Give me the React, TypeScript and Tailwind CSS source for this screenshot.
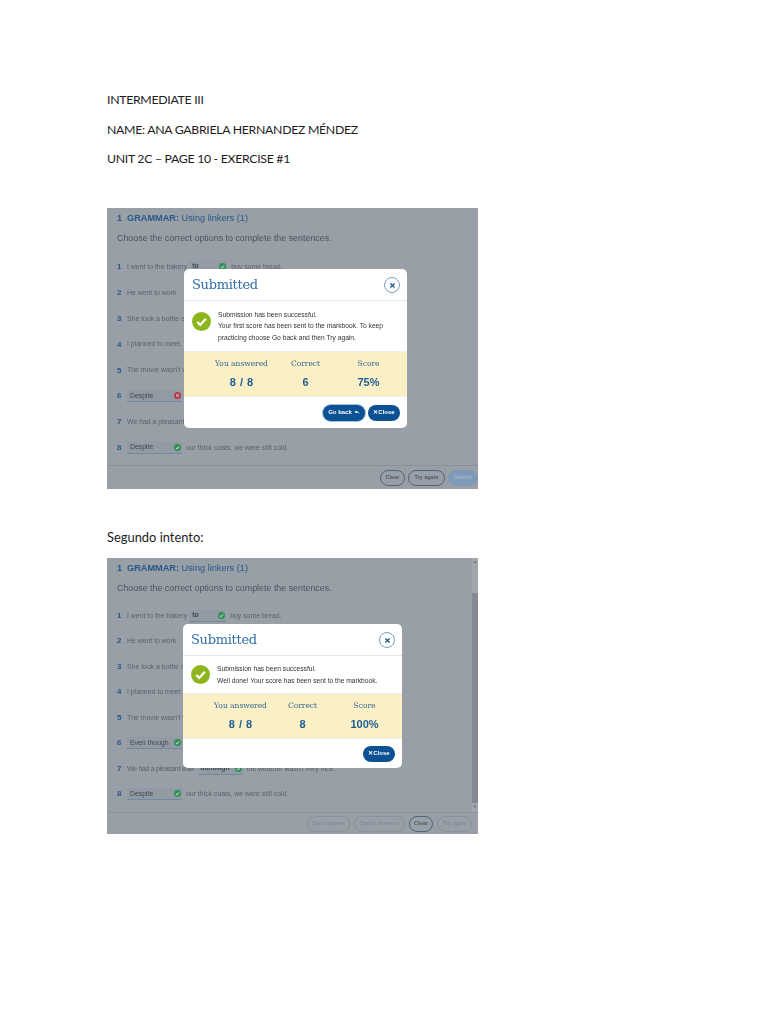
import React from "react";

type Row = { n: number; pre: string; answer?: string; ok?: boolean; post?: string; field?: string; bold?: boolean; preClass?: string };

const Mark = ({ ok = true }: { ok?: boolean }) => (
  <svg viewBox="0 0 10 10" className="w-[7px] h-[7px] shrink-0">
    <circle cx="5" cy="5" r="5" fill={ok ? "#2f8f57" : "#b5384a"} />
    {ok ? (
      <path d="M2.6 5.2 4.4 7 7.6 3.4" stroke="#a9c9b4" strokeWidth="1.5" fill="none" />
    ) : (
      <path d="M3.2 3.2 6.8 6.8M6.8 3.2 3.2 6.8" stroke="#d8a8b0" strokeWidth="1.5" fill="none" />
    )}
  </svg>
);

const ExerciseRow = ({ row, height }: { row: Row; height: string }) => (
  <div className={`flex items-center text-[6.9px] text-[#59636d] whitespace-nowrap ${height}`}>
    <span className="w-[10px] font-bold text-[8px] text-[#27598a]">{row.n}</span>
    <span className={row.preClass}>{row.pre}</span>
    {row.answer && (
      <span
        className={`mr-[4px] h-[12px] flex items-center justify-between border-b border-[#7288a0] bg-[#929aa3] pl-[3px] pr-[1px] text-[#3f4954] ${
          row.bold ? "font-bold" : ""
        } ${row.field ?? "w-[55px]"}`}
      >
        <span>{row.answer}</span>
        <Mark ok={row.ok} />
      </span>
    )}
    <span>{row.post}</span>
  </div>
);

const Pill = ({ children, muted, filled, width }: { children: React.ReactNode; muted?: boolean; filled?: boolean; width: string }) => (
  <span
    className={`h-[16px] rounded-full flex items-center justify-center text-[5.5px] font-bold border whitespace-nowrap ${width} ${
      filled
        ? "bg-[#7d9ab8] border-[#7d9ab8] text-[#a3b5c6]"
        : muted
        ? "border-[#87929c] text-[#838d97]"
        : "border-[#4f6579] text-[#4d5a66]"
    }`}
  >
    {children}
  </span>
);

const Stat = ({ label, value, className }: { label: string; value: string; className: string }) => (
  <div className={`flex flex-col items-center ${className}`}>
    <span className="text-[7.5px] leading-[10px] text-[#2f6796] font-['DejaVu_Serif',serif]">{label}</span>
    <span className="mt-[7px] text-[11px] leading-[12px] font-bold text-[#1c5e98] [word-spacing:1px]">{value}</span>
  </div>
);

const Action = ({ children, ring }: { children: React.ReactNode; ring?: boolean }) => (
  <span
    className={`h-[16px] rounded-full bg-[#0b5193] text-white text-[6px] font-bold flex items-center justify-center gap-[2px] whitespace-nowrap ${
      ring ? "w-[42px] ring-1 ring-[#9cc0de]" : "w-[32px]"
    }`}
  >
    {children}
  </span>
);

const BackArrow = () => (
  <svg viewBox="0 0 10 8" className="w-[6px] h-[5px]">
    <path d="M4 0.5 0.8 3 4 5.5V4c2.4-.4 4 .6 5 3 0-3-1.8-5-5-5.2z" fill="#fff" />
  </svg>
);

const Modal = ({
  lines,
  stats,
  actions,
  className,
  bodyClass,
  iconClass,
}: {
  lines: string[];
  stats: React.ReactNode;
  actions: React.ReactNode;
  className: string;
  bodyClass: string;
  iconClass?: string;
}) => (
  <div className={`absolute bg-white rounded-[5px] overflow-hidden flex flex-col ${className}`}>
    <div className="h-[32px] shrink-0 flex items-center justify-between pl-[8px] pr-[7px] pt-[1px] border-b border-[#e3e6e8]">
      <span className="text-[13px] text-[#2e6ea6] font-['DejaVu_Serif',serif] tracking-[-0.3px]">Submitted</span>
      <span className="w-[16px] h-[16px] rounded-full border-[1.5px] border-[#7c9dbb] flex items-center justify-center">
        <svg viewBox="0 0 10 10" className="w-[7px] h-[7px]">
          <path d="M2 2 8 8M8 2 2 8" stroke="#1f5b90" strokeWidth="2" />
        </svg>
      </span>
    </div>
    <div className={`flex items-center pl-[8px] gap-[7px] ${bodyClass}`}>
      <svg viewBox="0 0 20 20" className={`w-[19px] h-[19px] shrink-0 ${iconClass ?? ""}`}>
        <circle cx="10" cy="10" r="10" fill="#8db61d" />
        <path d="M5.5 10.5 8.7 13.6 14.6 7" stroke="#fff" strokeWidth="2.4" fill="none" />
      </svg>
      <div className="text-[6.7px] leading-[11.6px] text-[#2d3338]">
        {lines.map((l) => (
          <div key={l} className="whitespace-nowrap">
            {l}
          </div>
        ))}
      </div>
    </div>
    <div className="h-[46px] shrink-0 bg-[#fbf0c5] border-y border-[#eeeeea] flex items-start pt-[7px]">{stats}</div>
    <div className="flex-1 flex items-center justify-end pr-[7px] gap-[3px]">{actions}</div>
  </div>
);

const Panel = ({
  rows,
  footer,
  modal,
  className,
  rowHeight,
  instructionClass,
  footerClass,
  scroll,
}: {
  rows: Row[];
  footer: React.ReactNode;
  modal: React.ReactNode;
  className: string;
  rowHeight: string;
  instructionClass: string;
  footerClass: string;
  scroll?: boolean;
}) => (
  <div className={`relative w-[371px] bg-[#989fa6] blur-[0.35px] overflow-hidden flex flex-col ${className}`}>
    {scroll && (
      <div className="absolute right-0 top-0 bottom-[22px] w-[6px] bg-[#a0a6ac] flex flex-col items-center">
        <span className="h-[35px] text-[4px] leading-[8px] text-[#5d646b]">▲</span>
        <div className="h-[210px] w-full bg-[#838a91]" />
        <span className="text-[4px] leading-[8px] text-[#5d646b]">▼</span>
      </div>
    )}
    <div className="flex-1 pl-[10px]">
      <div className="h-[21px] pt-[5px] text-[9.2px] leading-[11px] text-[#27598a] whitespace-nowrap">
        <span className="font-bold inline-block w-[10px]">1</span>
        <b>GRAMMAR:</b> Using linkers (1)
      </div>
      <div className={`text-[8.9px] leading-[18px] text-[#4a545e] whitespace-nowrap ${instructionClass}`}>
        Choose the correct options to complete the sentences.
      </div>
      {rows.map((r) => (
        <ExerciseRow key={r.n} row={r} height={rowHeight} />
      ))}
    </div>
    <div className={`shrink-0 border-t border-[#8a9199] flex items-center justify-end ${footerClass}`}>{footer}</div>
    {modal}
  </div>
);

const rowsA: Row[] = [
  { n: 1, pre: "I went to the bakery", answer: "to", ok: true, post: "buy some bread.", field: "w-[38px] ml-[2px]", bold: true },
  { n: 2, pre: "He went to work" },
  { n: 3, pre: "She took a bottle of" },
  { n: 4, pre: "I planned to meet" },
  { n: 5, pre: "The movie wasn't very" },
  { n: 6, pre: "", answer: "Despite", ok: false },
  { n: 7, pre: "We had a pleasant" },
  { n: 8, pre: "", answer: "Despite", ok: true, post: "our thick coats, we were still cold." },
];

const rowsB: Row[] = [
  { n: 1, pre: "I went to the bakery", answer: "to", ok: true, post: "buy some bread.", field: "w-[37px] ml-[2px]", bold: true },
  { n: 2, pre: "He went to work" },
  { n: 3, pre: "She took a bottle of" },
  { n: 4, pre: "I planned to meet" },
  { n: 5, pre: "The movie wasn't very" },
  { n: 6, pre: "", answer: "Even though", ok: true },
  {
    n: 7,
    pre: "We had a pleasant walk",
    preClass: "tracking-[-0.25px]",
    answer: "although",
    ok: true,
    post: "the weather wasn't very nice.",
    field: "w-[45px] ml-[3px]",
    bold: true,
  },
  { n: 8, pre: "", answer: "Despite", ok: true, post: "our thick coats, we were still cold." },
];

export default function App() {
  return (
    <div className="min-h-[1024px] bg-white pt-[91px] pl-[107px] font-['Liberation_Sans',sans-serif]">
      <div className="font-['Lato',sans-serif] text-[12.3px] tracking-[-0.31px] text-[#1c1c1c]">
        <p className="h-[30px] leading-[18px]">INTERMEDIATE III</p>
        <p className="h-[29px] leading-[18px]">NAME: ANA GABRIELA HERNANDEZ MÉNDEZ</p>
        <p className="h-[18px] leading-[18px]">UNIT 2C – PAGE 10 - EXERCISE #1</p>
      </div>
      <Panel
        className="mt-[40px] h-[281px]"
        rowHeight="h-[25.9px]"
        instructionClass="h-[25px]"
        footerClass="h-[24px] pr-[0px] gap-[3px]"
        rows={rowsA}
        footer={
          <>
            <Pill width="w-[25px]">Clear</Pill>
            <Pill width="w-[37px]">Try again</Pill>
            <Pill filled width="w-[30px]">Submit</Pill>
          </>
        }
        modal={
          <Modal
            className="left-[77px] top-[61px] w-[223px] h-[159px]"
            bodyClass="h-[50px]"
            iconClass="-mt-[10px]"
            lines={[
              "Submission has been successful.",
              "Your first score has been sent to the markbook. To keep",
              "practicing choose Go back and then Try again.",
            ]}
            stats={
              <>
                <Stat label="You answered" value="8 / 8" className="ml-[25px] w-[65px]" />
                <Stat label="Correct" value="6" className="ml-[8px] w-[47px]" />
                <Stat label="Score" value="75%" className="ml-[16px] w-[47px]" />
              </>
            }
            actions={
              <>
                <Action ring>
                  Go back <BackArrow />
                </Action>
                <Action>✕Close</Action>
              </>
            }
          />
        }
      />
      <p className="mt-[39px] h-[30px] leading-[18px] font-['Lato',sans-serif] text-[12.9px] text-[#1c1c1c]">Segundo intento:</p>
      <Panel
        className="h-[276px]"
        scroll
        rowHeight="h-[25.5px]"
        instructionClass="h-[24px]"
        footerClass="h-[22px] pr-[6px] gap-[4px]"
        rows={rowsB}
        footer={
          <>
            <Pill muted width="w-[43px]">See answers</Pill>
            <Pill muted width="w-[51px]">Check answers</Pill>
            <Pill width="w-[24px]">Clear</Pill>
            <Pill muted width="w-[35px]">Try again</Pill>
          </>
        }
        modal={
          <Modal
            className="left-[76px] top-[66px] w-[219px] h-[144px]"
            bodyClass="h-[37px]"
            lines={["Submission has been successful.", "Well done! Your score has been sent to the markbook."]}
            stats={
              <>
                <Stat label="You answered" value="8 / 8" className="ml-[25px] w-[65px]" />
                <Stat label="Correct" value="8" className="ml-[6px] w-[47px]" />
                <Stat label="Score" value="100%" className="ml-[15px] w-[47px]" />
              </>
            }
            actions={<Action>✕Close</Action>}
          />
        }
      />
    </div>
  );
}
